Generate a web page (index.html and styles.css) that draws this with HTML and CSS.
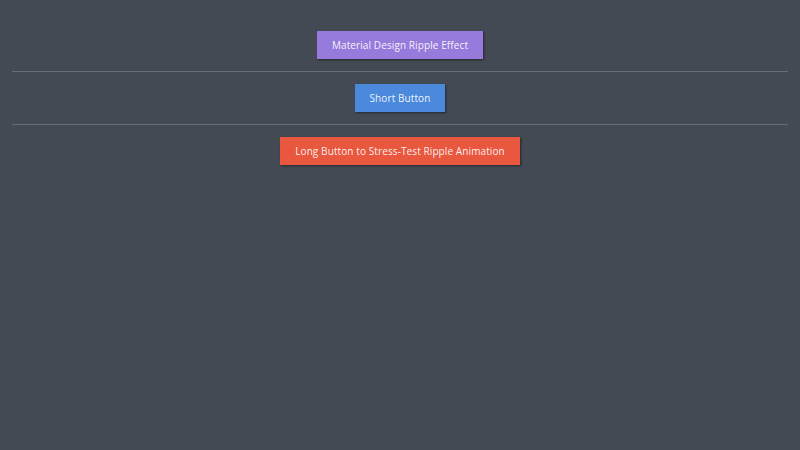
FILE: index.html
```html
<!DOCTYPE html>
<html lang="en">
  <head>
    <meta charset="UTF-8" />
    <meta name="viewport" content="width=device-width, initial-scale=1.0" />
    <title>Ripple Buttons</title>
    <link rel="stylesheet" href="styles.css">
  </head>
  <body>
    <div class="demo">
      <div class="demo-row">
        <button class="ripple-btn btn-purple">Material Design Ripple Effect</button>
      </div>
      <div class="demo-row">
        <button class="ripple-btn btn-blue">Short Button</button>
      </div>
      <div class="demo-row last">
        <button class="ripple-btn btn-red">Long Button to Stress-Test Ripple Animation</button>
      </div>
    </div>
  </body>
</html>
```

FILE: styles.css
```css
body {
  margin: 0;
  background-color: #434a54;
  font-family: "Open Sans", "Noto Sans", sans-serif;
}
.demo {
  padding: 19px 12px 0;
}
.demo-row {
  display: flex;
  justify-content: center;
  padding: 12px 0;
  border-bottom: 1px solid #656d78;
}
.demo-row.last {
  border-bottom: none;
}
.ripple-btn {
  height: 28px;
  padding: 0 15px;
  border: none;
  border-radius: 0;
  color: rgba(255, 255, 255, 0.92);
  font-family: inherit;
  font-size: 10px;
  letter-spacing: 0.1px;
  box-shadow: 1px 1px 2px rgba(0, 0, 0, 0.45);
  cursor: pointer;
}
.btn-purple {
  background-color: #967adc;
}
.btn-blue {
  background-color: #4a89dc;
}
.btn-red {
  background-color: #e9573f;
}
```
